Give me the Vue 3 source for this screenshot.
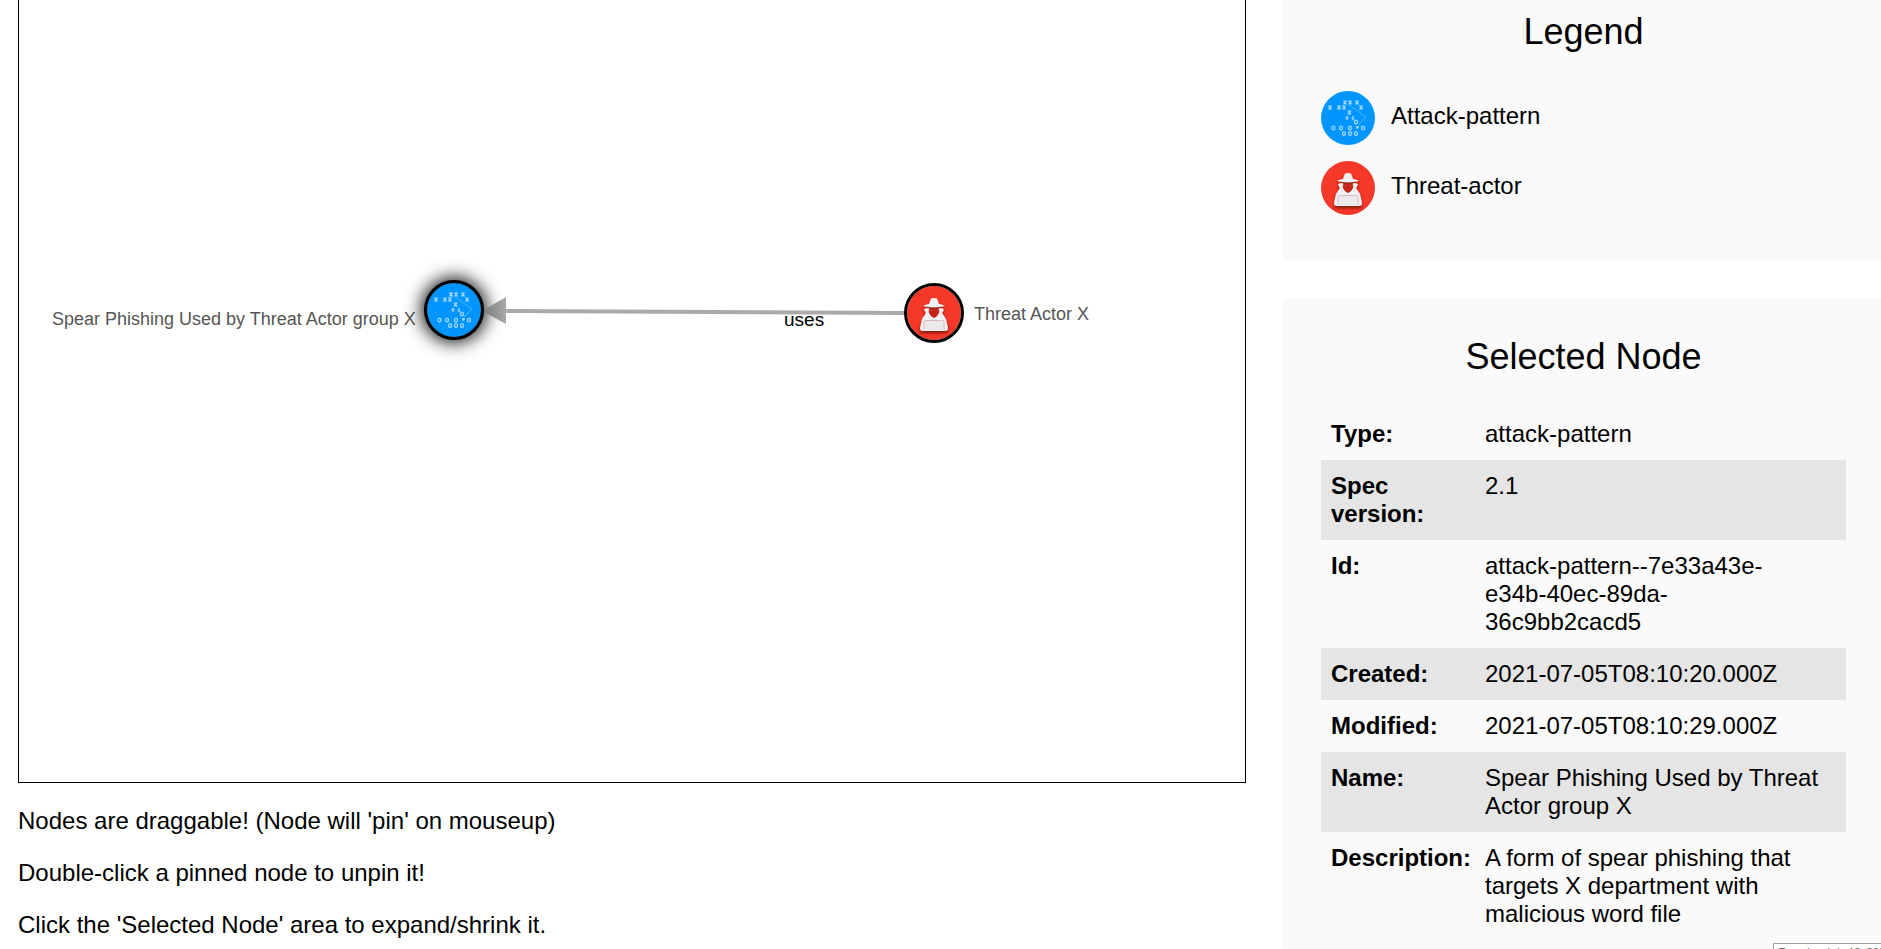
<script setup>
import { ref } from 'vue'

const expanded = ref(true)

const legend = [
  { id: 'attack', label: 'Attack-pattern' },
  { id: 'actor', label: 'Threat-actor' },
]

const fields = [
  { key: 'Type:', value: 'attack-pattern' },
  { key: 'Spec version:', value: '2.1' },
  { key: 'Id:', value: 'attack-pattern--7e33a43e-e34b-40ec-89da-36c9bb2cacd5' },
  { key: 'Created:', value: '2021-07-05T08:10:20.000Z' },
  { key: 'Modified:', value: '2021-07-05T08:10:29.000Z' },
  { key: 'Name:', value: 'Spear Phishing Used by Threat Actor group X' },
  { key: 'Description:', value: 'A form of spear phishing that targets X department with malicious word file' },
]

const crosses = [[24, 11.5], [29, 11.5], [36, 11.5], [9, 16.5], [18, 16.5], [23, 16.5], [40, 16.5], [28.5, 21.5]]
const rings = [[35, 31], [12.5, 37], [20, 37], [29, 37], [42, 37], [23, 42.5], [29, 42.5], [35, 42.5]]
</script>

<template>
  <svg class="symbols" width="0" height="0" aria-hidden="true">
    <defs>
      <symbol id="attack" viewBox="0 0 54 54">
        <circle cx="27" cy="27" r="27" fill="#0095ff" />
        <path d="M28 14 L45 26 L37 34" fill="none" stroke="#4db5ff" stroke-width="1" />
        <g fill="none" stroke="#a6d8ff" stroke-width="1.300">
          <path
            v-for="c in crosses"
            :key="c.join()"
            :d="`M${c[0] - 1.5} ${c[1] - 2} l3 4 m0 -4 l-3 4`"
          />
          <ellipse v-for="r in rings" :key="r.join()" :cx="r[0]" :cy="r[1]" rx="1.5" ry="1.9" />
          <path d="M26 25v4m-1.500 -2.500h3 M32 25v3m-1 -1l2 2 M36 35v3m-1 -2h3" />
        </g>
      </symbol>
      <symbol id="actor" viewBox="0 0 54 54">
        <defs>
          <filter id="soft" x="-30%" y="-30%" width="160%" height="170%">
            <feDropShadow dx="0" dy="2" stdDeviation="1.4" flood-color="#5a0800" flood-opacity="0.8" />
          </filter>
        </defs>
        <circle cx="27" cy="27" r="27" fill="#f53828" />
        <g filter="url(#soft)">
          <path
            d="M24 12.500 Q27 11.500 30 12.500 L32 18 Q36 18.500 38 20 Q27 22.500 16 20 Q18 18.500 22 18Z"
            fill="#f1eff1"
          />
          <path
            d="M17 23.500 Q19 21.500 22 22.500 Q22 29 27 31 Q32 29 32 22.500 Q35 21.500 37 23.500 L35 27 L37 30 L39 33 L41 42 Q41 45 38 45 H16 Q13 45 13 42 L15 33 L17 30 L19 27Z"
            fill="#f1eff1"
          />
        </g>
        <path d="M21.500 24 L24.500 25.500 L27 22 L29.500 25.500 L32.500 24 Q32 30 27 32 Q22 30 21.500 24Z" fill="#c4231a" />
        <path d="M17 44 V36 Q17 34.500 18.500 34.500 H35.500 Q37 34.500 37 36 V44" fill="#ebe9eb" stroke="#dcbcbc" stroke-width="1" />
      </symbol>
    </defs>
  </svg>

  <div class="page">
    <main class="main">
      <div class="canvas">
        <svg class="graph" width="100%" height="782" role="img" aria-label="Threat Actor X uses Spear Phishing">
          <defs>
            <filter id="glow" x="-80%" y="-80%" width="260%" height="260%">
              <feGaussianBlur stdDeviation="9" />
            </filter>
            <linearGradient id="tip" x1="0" x2="1">
              <stop offset="0" stop-color="#777" />
              <stop offset="1" stop-color="#aaa" />
            </linearGradient>
          </defs>
          <path d="M486 311 L886 313" stroke="#aaa" stroke-width="4" />
          <circle cx="435" cy="310" r="32" fill="#000" filter="url(#glow)" />
          <path d="M463 311 L487 297 V324Z" fill="url(#tip)" />
          <use href="#attack" x="408" y="283" width="54" height="54" />
          <circle cx="435" cy="310" r="28.500" fill="none" stroke="#000" stroke-width="3" />
          <use href="#actor" x="888" y="286" width="54" height="54" />
          <circle cx="915" cy="313" r="28.500" fill="none" stroke="#000" stroke-width="3" />
          <text class="node-label" x="33" y="325">Spear Phishing Used by Threat Actor group X</text>
          <text class="node-label" x="955" y="320">Threat Actor X</text>
          <text class="edge-label" x="765" y="326">uses</text>
        </svg>
      </div>
      <p>Nodes are draggable! (Node will 'pin' on mouseup)</p>
      <p>Double-click a pinned node to unpin it!</p>
      <p>Click the 'Selected Node' area to expand/shrink it.</p>
    </main>

    <aside class="side">
      <section class="panel legend">
        <h2>Legend</h2>
        <ul>
          <li v-for="item in legend" :key="item.id">
            <svg width="54" height="54" aria-hidden="true"><use :href="'#' + item.id" /></svg>
            <span>{{ item.label }}</span>
          </li>
        </ul>
      </section>
      <section class="panel selected" @click="expanded = !expanded">
        <h2>Selected Node</h2>
        <table v-if="expanded">
          <tbody>
            <tr v-for="f in fields" :key="f.key">
              <th scope="row">{{ f.key }}</th>
              <td>{{ f.value }}</td>
            </tr>
          </tbody>
        </table>
      </section>
    </aside>

    <div class="hint">Tuesday, July 13, 2021</div>
  </div>
</template>

<style>
body {
  background: #fff;
}
</style>

<style scoped>
.symbols {
  position: absolute;
}
.page {
  position: relative;
  display: grid;
  grid-template-columns: minmax(0, 1228fr) minmax(0, 598fr);
  column-gap: 37px;
  height: 100vh;
  padding-left: 18px;
  box-sizing: border-box;
  overflow: hidden;
  font-family: "Liberation Sans", Arial, sans-serif;
  font-size: 24px;
  line-height: 28px;
  color: #000;
}
.canvas {
  border: 1px solid #000;
  border-top: 0;
}
.graph {
  display: block;
}
.node-label {
  font-size: 18px;
  fill: #555;
}
.edge-label {
  font-size: 19px;
}
p {
  margin: 24px 0;
}
.side {
  display: flex;
  flex-direction: column;
  gap: 37px;
}
.panel {
  padding: 38px 35px 38px 38px;
  background: #fafafa;
}
.legend {
  padding-top: 11px;
}
.selected {
  flex: 1;
}
h2 {
  margin: 0 0 30px;
  font-size: 36px;
  font-weight: 400;
  line-height: 42px;
  text-align: center;
}
ul {
  display: flex;
  flex-direction: column;
  gap: 16px;
  margin: 38px 0 8px;
  padding: 0;
  list-style: none;
}
li {
  display: flex;
  align-items: center;
  gap: 16px;
}
li span {
  margin-bottom: 4px;
}
table {
  width: 100%;
  border-collapse: collapse;
}
tr:nth-child(even) {
  background: #e5e5e5;
}
th,
td {
  padding: 12px 10px;
  text-align: left;
  vertical-align: top;
}
th {
  width: 140px;
  padding-right: 4px;
}
td {
  padding-right: 24px;
}
.hint {
  position: absolute;
  top: 943px;
  left: 1773px;
  right: 0;
  padding: 0 5px;
  border: 1px solid #a0a0a0;
  border-right: 0;
  background: #fff;
  color: #575757;
  font-family: "Open Sans", sans-serif;
  font-size: 11px;
  line-height: 16px;
  white-space: nowrap;
}
</style>
